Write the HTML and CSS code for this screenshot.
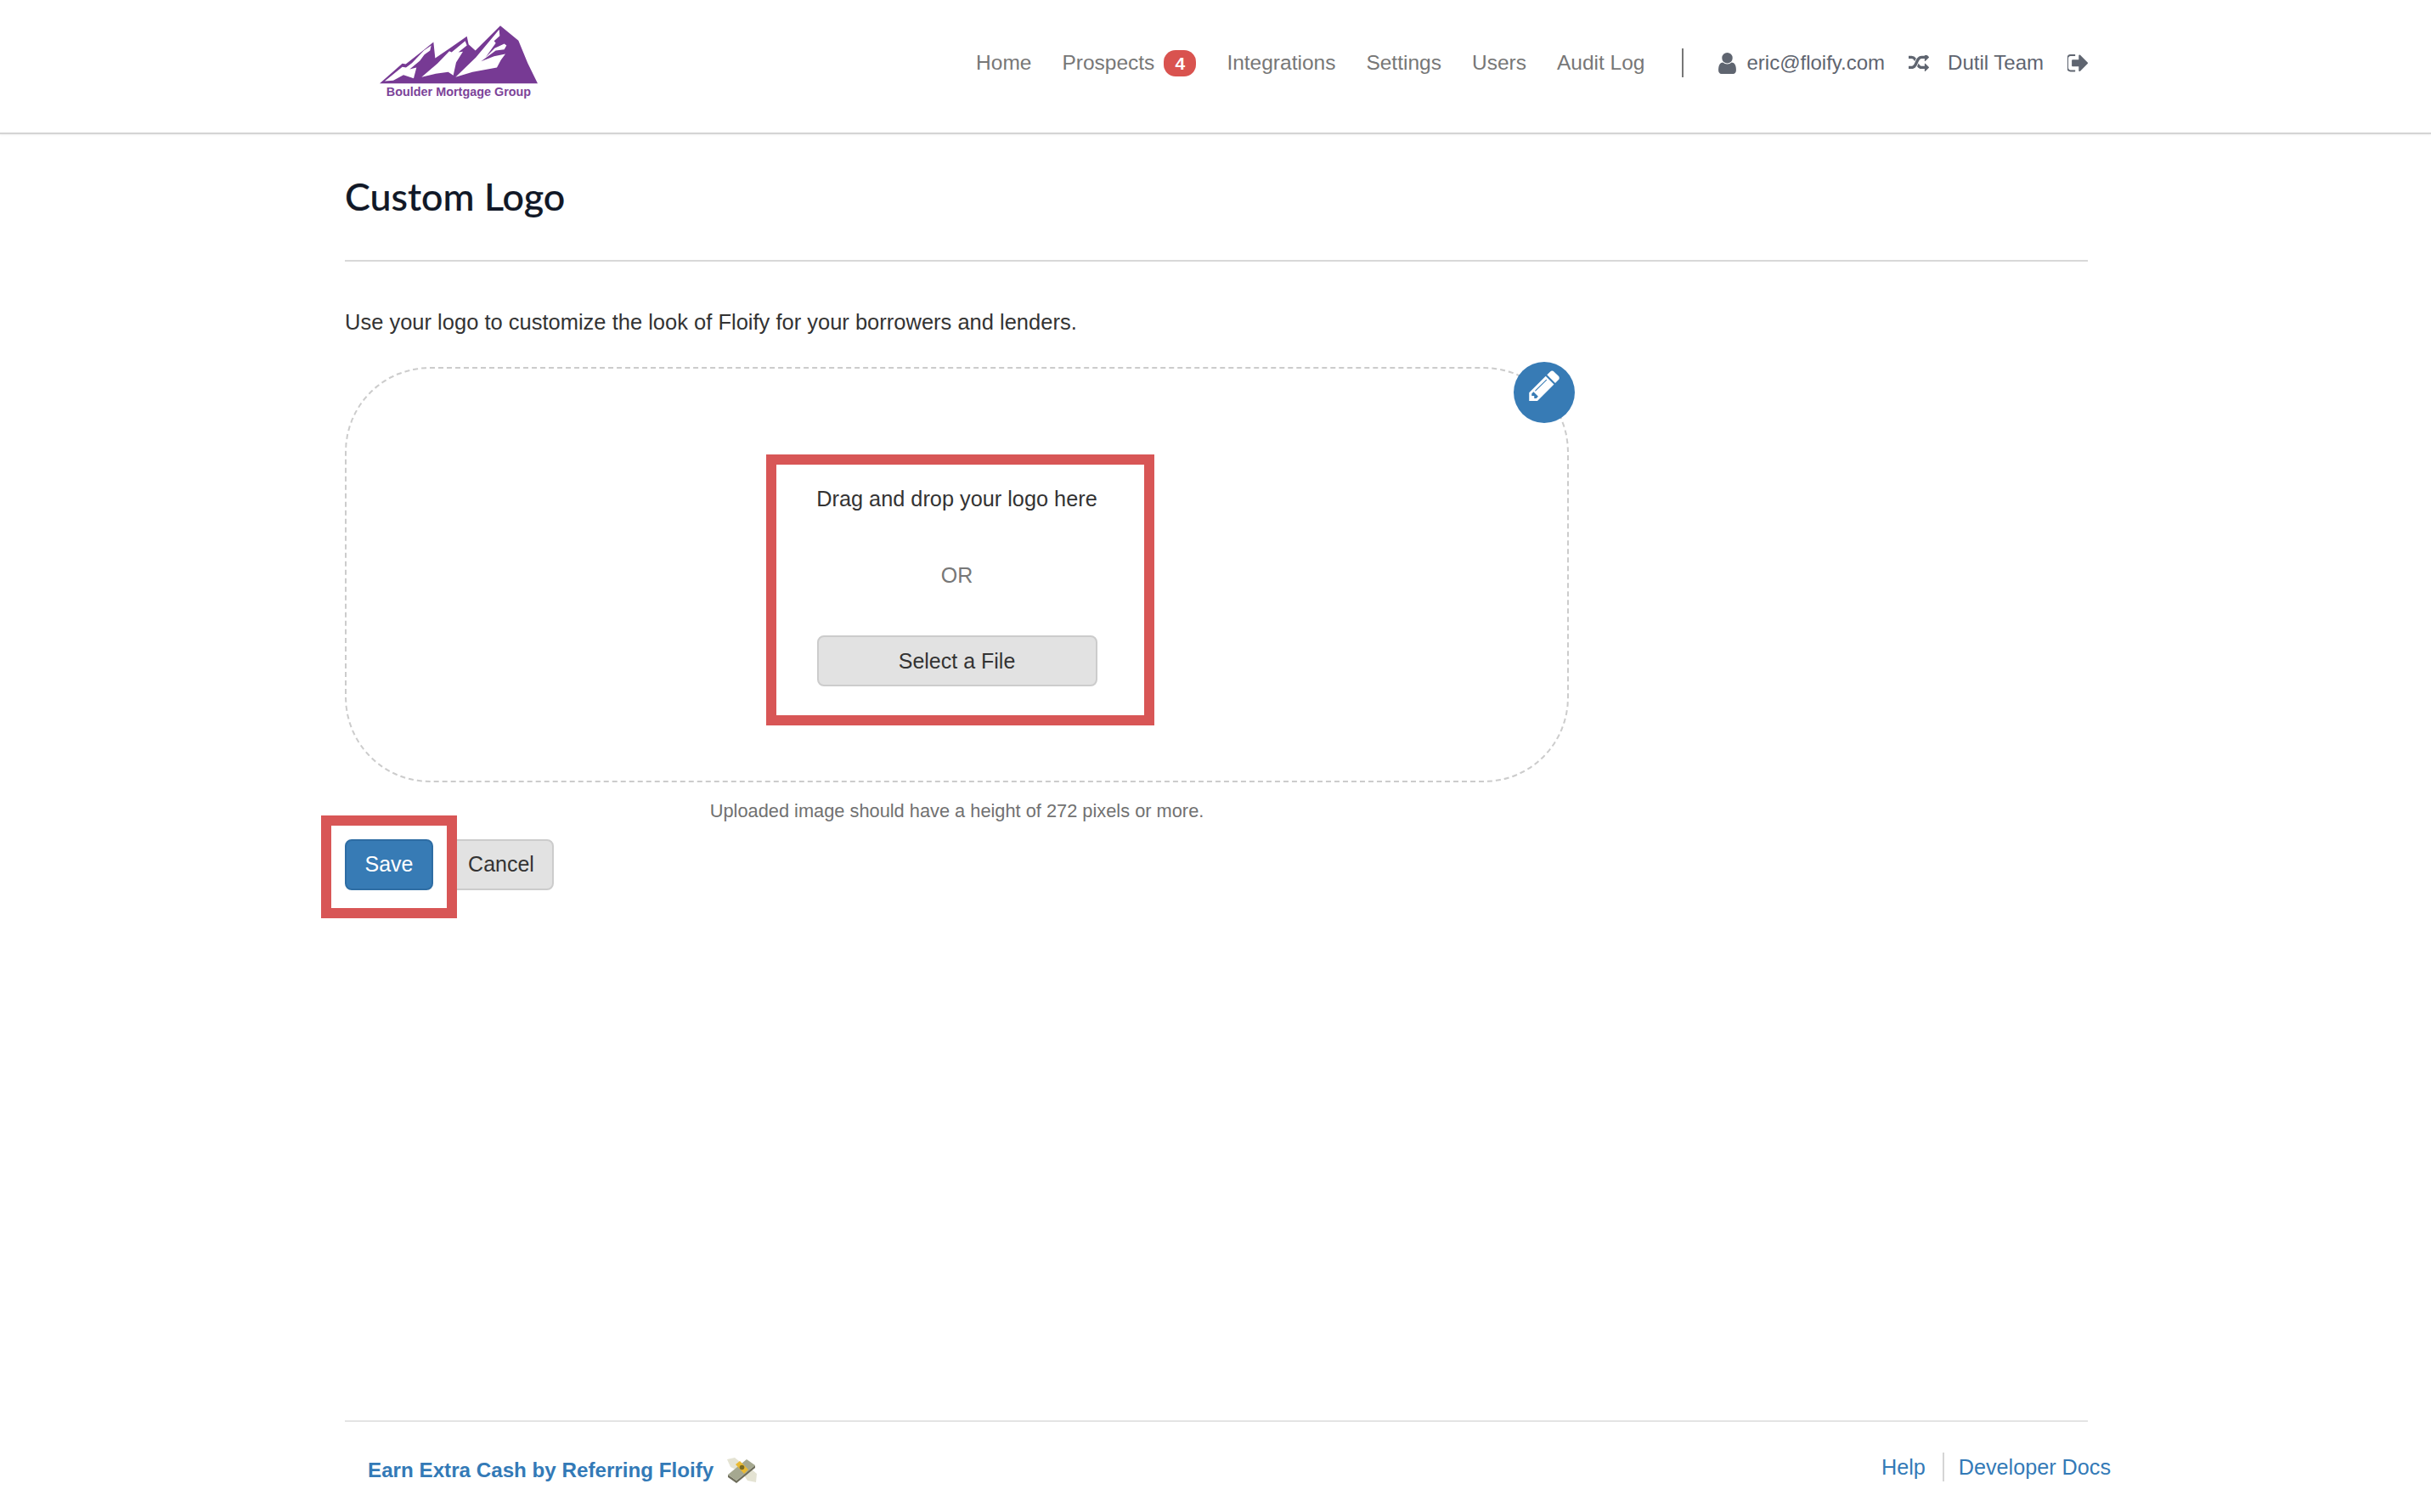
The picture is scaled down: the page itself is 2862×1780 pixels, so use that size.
FILE: index.html
```html
<!DOCTYPE html>
<html lang="en">
<head>
<meta charset="utf-8">
<title>Custom Logo</title>
<link rel="stylesheet" href="styles.css">
</head>
<body>
<header class="topbar">
  <div class="topbar-inner">
    <a class="logo" href="#">
      <svg class="logo-mark" viewBox="142 92 558 206" aria-hidden="true">
        <path class="logo-fill" d="M142 296 L222 226 L234 228 L300 176 L332 150 L338 207 L392 170 L450 130 L456 158 L480 180 L568 92 L632 145 L665 225 L700 296 Z"/>
        <path class="logo-snow" d="M160 288 L222 238 L235 240 L256 224 L298 180 L324 162 L320 180 L300 194 L284 216 L248 246 L272 240 L262 278 L226 266 L190 286 Z"/>
        <path class="logo-snow" d="M290 274 L346 226 L388 182 L396 186 L444 146 L450 162 L420 186 L436 184 L412 222 L402 268 L384 256 L340 262 Z"/>
        <path class="logo-snow" d="M410 274 L482 204 L564 106 L566 128 L546 146 L552 154 L516 204 L548 172 L582 156 L590 162 L582 176 L552 180 L500 218 L546 200 L586 192 L570 214 L556 240 L470 256 Z"/>
      </svg>
      <span class="logo-text">Boulder Mortgage Group</span>
    </a>
    <nav class="nav">
      <a class="nav-link" href="#">Home</a>
      <a class="nav-link nav-badge-link" href="#">Prospects <span class="badge">4</span></a>
      <a class="nav-link" href="#">Integrations</a>
      <a class="nav-link" href="#">Settings</a>
      <a class="nav-link" href="#">Users</a>
      <a class="nav-link" href="#">Audit Log</a>
      <span class="nav-divider"></span>
      <a class="user-link user-email" href="#">
        <svg class="icon icon-user" viewBox="256 128 1280 1536"><path d="M1536 1399q0 109-62.5 187t-150.5 78h-854q-88 0-150.5-78t-62.5-187q0-85 8.5-160.5t31.5-152 58.5-131 94-89 134.5-34.5q131 128 313 128t313-128q76 0 134.5 34.5t94 89 58.5 131 31.5 152 8.5 160.5zm-256-887q0 159-112.5 271.5t-271.5 112.5-271.5-112.5-112.5-271.5 112.5-271.5 271.5-112.5 271.5 112.5 112.5 271.5z"/></svg>
        eric@floify.com
      </a>
      <a class="user-link user-team" href="#">
        <svg class="icon icon-random" viewBox="0 220 1792 1390"><path d="M666 481q-60 92-137 273-22-45-37-72.5t-40.5-63.5-51-56.5-63-35-81.5-14.5h-224q-14 0-23-9t-9-23v-192q0-14 9-23t23-9h224q250 0 410 225zm1126 799q0 14-9 23l-320 320q-9 9-23 9-13 0-22.5-9.5t-9.5-22.5v-192q-32 0-85 .5t-81 1-73-1-71-5-64-10.5-63-18.5-58-28.5-59-40-55-53.5-56-69.5q59-93 136-273 22 45 37 72.5t40.5 63.5 51 56.5 63 35 81.5 14.5h256v-192q0-14 9-23t23-9q12 0 24 10l319 319q9 9 9 23zm0-896q0 14-9 23l-320 320q-9 9-23 9-13 0-22.5-9.5t-9.5-22.5v-192h-256q-48 0-87 15t-69 45-51 61.5-45 77.5q-32 62-78 171-29 66-49.5 111t-54 105-64 100-74 83-90 68.5-106.5 42-128 16.5h-224q-14 0-23-9t-9-23v-192q0-14 9-23t23-9h224q48 0 87-15t69-45 51-61.5 45-77.5q32-62 78-171 29-66 49.5-111t54-105 64-100 74-83 90-68.5 106.5-42 128-16.5h256v-192q0-14 9-23t23-9q12 0 24 10l319 319q9 9 9 23z"/></svg>
        Dutil Team
      </a>
      <a class="user-link user-out" href="#" aria-label="Sign out">
        <svg class="icon icon-out" viewBox="128 256 1504 1312"><path d="M704 1440q0 4 1 20t.5 26.5-3 23.5-10 19.5-20.5 6.5h-320q-119 0-203.5-84.5t-84.5-203.5v-704q0-119 84.5-203.5t203.5-84.5h320q13 0 22.5 9.5t9.5 22.5q0 4 1 20t.5 26.5-3 23.5-10 19.5-20.5 6.5h-320q-66 0-113 47t-47 113v704q0 66 47 113t113 47h312l11.5 1 11.5 3 8 5.5 7 9 2 13.5zm928-544q0 26-19 45l-544 544q-19 19-45 19t-45-19-19-45v-288h-448q-26 0-45-19t-19-45v-384q0-26 19-45t45-19h448v-288q0-26 19-45t45-19 45 19l544 544q19 19 19 45z"/></svg>
      </a>
    </nav>
  </div>
</header>

<main class="page">
  <h1 class="title">Custom Logo</h1>
  <p class="intro">Use your logo to customize the look of Floify for your borrowers and lenders.</p>

  <section class="dropzone">
    <p class="drop-text">Drag and drop your logo here</p>
    <p class="drop-or">OR</p>
    <button class="btn btn-default btn-select" type="button">Select a File</button>
    <span class="frame frame-drop"></span>
    <span class="edit-circle">
      <svg class="icon-pencil" viewBox="128 128 1515 1536"><path d="M491 1536l91-91-235-235-91 91v107h128v128h107zm523-928q0-22-22-22-10 0-17 7l-542 542q-7 7-7 17 0 22 22 22 10 0 17-7l542-542q7-7 7-17zm-54-192l416 416-832 832h-416v-416zm683 96q0 53-37 90l-166 166-416-416 166-165q36-38 90-38 53 0 91 38l235 234q37 39 37 91z"/></svg>
    </span>
  </section>
  <p class="hint">Uploaded image should have a height of 272 pixels or more.</p>

  <div class="actions">
    <button class="btn btn-primary" type="button">Save</button>
    <button class="btn btn-default btn-cancel" type="button">Cancel</button>
    <span class="frame frame-save"></span>
  </div>
</main>

<footer class="footer">
  <a class="refer" href="#">Earn Extra Cash by Referring Floify
    <svg class="money" viewBox="0 0 36 30" aria-hidden="true">
      <path class="wing" d="M0 2 L9 0 L19 8 L12 15 L4 11 Z"/>
      <path class="wing" d="M35 19 L34 29 L24 27 L18 18 L28 13 Z"/>
      <path class="bill-side" d="M1 20 L11 27 L33 9 L33 12 L11 30 L1 23 Z"/>
      <path class="bill" d="M1 20 L23 2 L33 9 L11 27 Z"/>
      <path class="bill-band" d="M10 8 L15 4 L25 14 L20 19 Z"/>
      <circle class="bill-mark" cx="17.500" cy="11.500" r="2.800"/>
    </svg>
  </a>
  <div class="footer-links">
    <a class="footer-link" href="#">Help</a>
    <span class="footer-sep"></span>
    <a class="footer-link" href="#">Developer Docs</a>
  </div>
</footer>
</body>
</html>
```
FILE: styles.css
```css
* { box-sizing: border-box; }
html, body { margin: 0; padding: 0; background: #fff; }
body {
  font-family: "Liberation Sans", Arial, sans-serif;
  font-size: 25px;
  color: #333;
  width: 2862px;
  height: 1780px;
  overflow: hidden;
}
a { text-decoration: none; }
p { margin: 0; }

.topbar {
  height: 158px;
  border-bottom: 2px solid #d4d4d4;
  box-shadow: 0 1px 2px rgba(0,0,0,.06);
}
.topbar-inner {
  width: 2052px;
  margin-left: 406px;
  height: 156px;
  display: flex;
  justify-content: space-between;
  position: relative;
}
.logo {
  margin-left: 41px;
  margin-top: 30px;
  width: 186px;
  display: flex;
  flex-direction: column;
  align-items: center;
}
.logo-mark { width: 186px; height: 69px; display: block; }
.logo-fill { fill: #773a94; }
.logo-snow { fill: #fff; }
.logo-text {
  font-size: 14.400px;
  font-weight: 700;
  line-height: 19px;
  color: #7c4399;
  white-space: nowrap;
}

.nav {
  display: flex;
  align-items: center;
  height: 148px;
  font-size: 24.500px;
}
.nav-link { color: #777; margin-right: 36px; white-space: nowrap; display: flex; align-items: center; }
.badge {
  display: inline-block;
  width: 38px;
  height: 31px;
  margin-left: 11px;
  border-radius: 14px;
  background: #d9534f;
  color: #fff;
  font-size: 21px;
  font-weight: 700;
  line-height: 31px;
  text-align: center;
}
.nav-divider {
  width: 2px;
  height: 34px;
  background: #777;
  margin: 0 41px 0 8px;
}
.user-link {
  color: #5f6570;
  display: flex;
  align-items: center;
  white-space: nowrap;
  font-size: 24px;
}
.icon { fill: #5f6570; display: block; }
.icon-user { width: 21px; height: 25px; margin-right: 12px; }
.icon-random { width: 24px; height: 19px; margin-right: 22px; }
.icon-out { width: 24px; height: 21px; }
.user-email { margin-right: 28px; }
.user-team { margin-right: 28px; }

.page {
  width: 2052px;
  margin-left: 406px;
}
.title {
  margin: 0;
  padding: 50px 0 40px;
  height: 150px;
  border-bottom: 2px solid #d8d8d8;
  font-family: Lato, "Noto Sans", sans-serif;
  font-size: 44.800px;
  font-weight: 500;
  line-height: 46px;
  color: #111827;
  -webkit-text-stroke: 0.2px #111827;
}
.intro {
  margin-top: 53px;
  font-size: 25.500px;
  line-height: 36px;
  color: #333;
}
.dropzone {
  position: relative;
  margin-top: 35px;
  width: 1441px;
  height: 489px;
  border: 2px dashed #ccc;
  border-radius: 100px;
  display: flex;
  flex-direction: column;
  align-items: center;
  padding-top: 135px;
}
.drop-text { font-size: 25.300px; line-height: 36px; color: #333; }
.drop-or { margin-top: 54px; line-height: 36px; color: #777; }
.btn {
  font-family: "Liberation Sans", Arial, sans-serif;
  font-size: 25px;
  height: 60px;
  border-radius: 8px;
  padding: 0 24px;
  cursor: pointer;
  display: block;
}
.btn-default { background: #e2e2e2; border: 2px solid #ccc; color: #333; }
.btn-primary { background: #377bb5; border: 2px solid #2e6da4; color: #fff; width: 104px; padding: 0 0 2px; }
.btn-select { width: 330px; margin-top: 53px; }
.btn-cancel { width: 126px; margin-left: 16px; padding: 0 0 2px 2px; }

.frame {
  position: absolute;
  border: 12px solid #d85656;
  pointer-events: none;
}
.frame-drop { left: 494px; top: 101px; width: 457px; height: 319px; }
.frame-save { left: -28px; top: -28px; width: 160px; height: 121px; }

.edit-circle {
  position: absolute;
  left: 1374px;
  top: -8px;
  width: 72px;
  height: 72px;
  border-radius: 50%;
  background: #377bb5;
  display: flex;
  align-items: flex-start;
  justify-content: center;
  padding-top: 10px;
}
.icon-pencil { width: 36px; height: 36px; fill: #fff; display: block; }

.hint {
  width: 1441px;
  margin-top: 16px;
  text-align: center;
  font-size: 21.800px;
  line-height: 36px;
  color: #717171;
}
.actions {
  position: relative;
  display: flex;
  margin-top: 15px;
}

.footer {
  position: absolute;
  left: 406px;
  top: 1672px;
  width: 2052px;
  border-top: 2px solid #e4e4e4;
  height: 108px;
}
.refer {
  position: absolute;
  left: 27px;
  top: 39px;
  display: flex;
  align-items: center;
  gap: 16px;
  color: #337ab7;
  font-weight: 700;
  font-size: 24.200px;
  line-height: 36px;
  white-space: nowrap;
}
.money { width: 36px; height: 30px; display: block; flex: none; }
.wing { fill: #e4e3d3; }
.bill { fill: #a5a890; }
.bill-side { fill: #6f6e5c; }
.bill-band { fill: #e9b932; }
.bill-mark { fill: #7a6a22; }
.footer-links {
  position: absolute;
  right: -27px;
  top: 36px;
  display: flex;
  align-items: center;
}
.footer-link { color: #337ab7; font-size: 25.200px; line-height: 34px; white-space: nowrap; }
.footer-sep { width: 2px; height: 34px; background: #d5d5d5; margin: 0 17px 0 20px; }
```
